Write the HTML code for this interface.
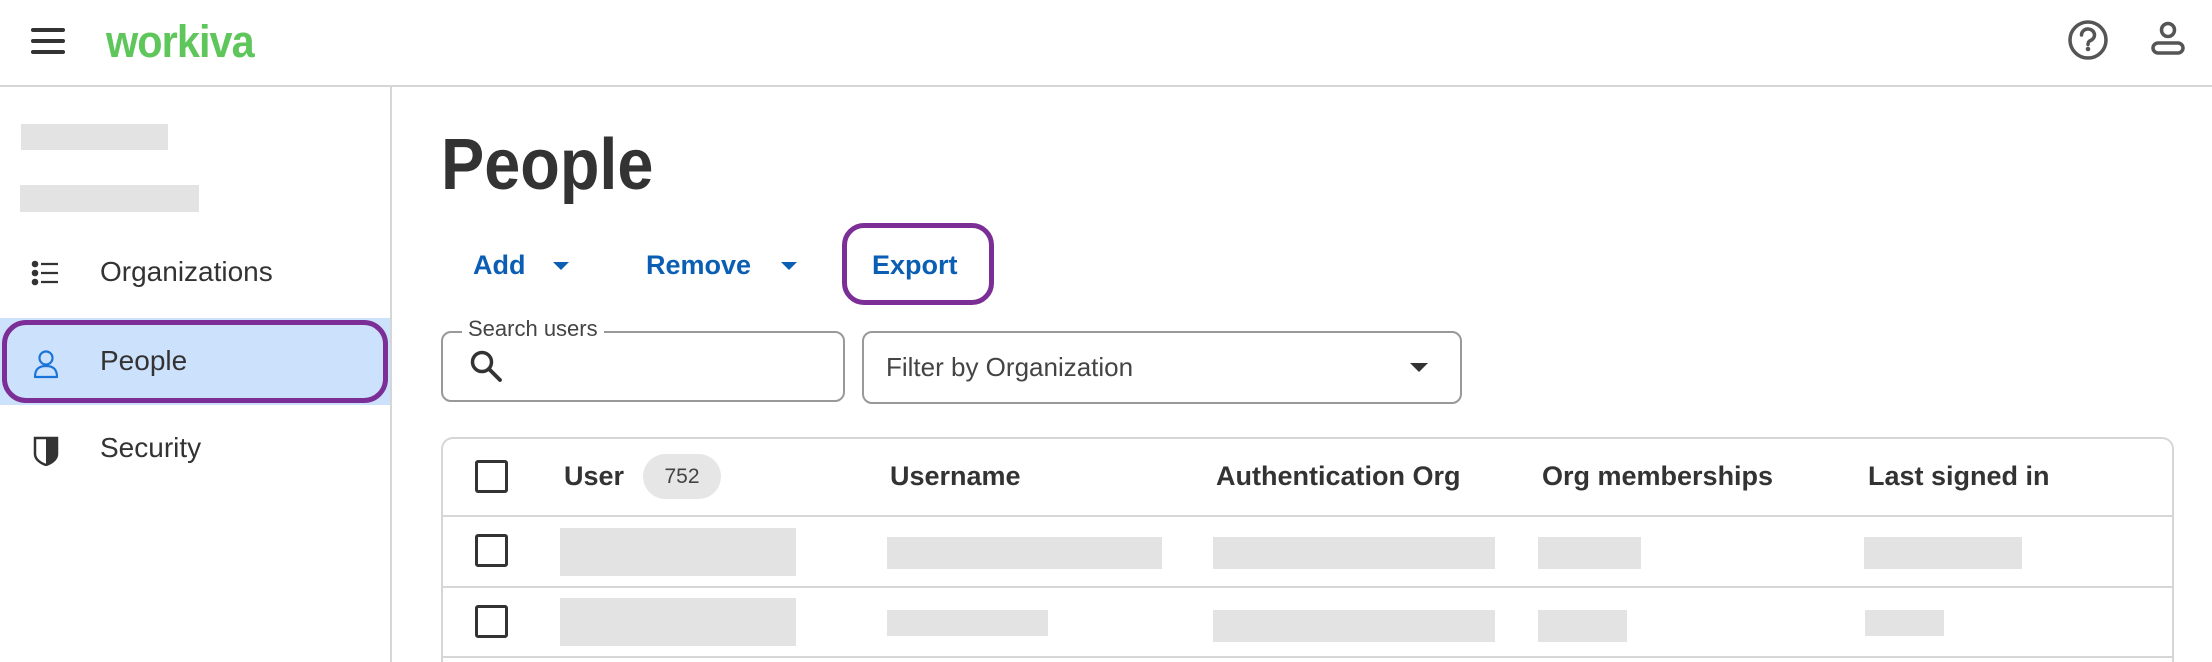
<!DOCTYPE html>
<html style="width:2212px;height:662px;overflow:hidden"><head><style>
*{box-sizing:border-box;margin:0;padding:0}
body{width:2212px;height:662px;overflow:hidden;background:#fff;font-family:"Liberation Sans",sans-serif;color:#333;position:relative}
.a{position:absolute}
.sk{position:absolute;background:#e3e3e3}
.blue{color:#0a5fb4;font-weight:bold;font-size:27px}
.th{position:absolute;font-weight:bold;font-size:27px;color:#333;top:461px}
.cb{position:absolute;width:33px;height:33px;border:3px solid #333;border-radius:3px;left:475px}
</style></head><body>
<div class="a" style="left:31px;top:28px;width:34px;height:4px;background:#333;box-shadow:0 11px 0 #333,0 22px 0 #333;border-radius:2px"></div>
<div class="a" style="left:106px;top:16px;font-size:45px;font-weight:bold;color:#5ec65b;letter-spacing:-1px;transform:scaleX(0.92);transform-origin:left">workiva</div>
<svg class="a" style="left:2066px;top:18px" width="44" height="44" viewBox="0 0 44 44"><circle cx="22" cy="22" r="18" fill="none" stroke="#555" stroke-width="3.5"/><path d="M15.5 17a6.5 6 0 1 1 9 5.5c-2 1-2.5 2-2.5 4" fill="none" stroke="#555" stroke-width="3.5" stroke-linecap="round"/><circle cx="22" cy="31" r="2.3" fill="#555"/></svg>
<svg class="a" style="left:2150px;top:20px" width="36" height="38" viewBox="0 0 36 38"><circle cx="18" cy="10" r="6.5" fill="none" stroke="#555" stroke-width="3.5"/><rect x="3" y="23" width="30" height="10" rx="5" fill="none" stroke="#555" stroke-width="3.5"/></svg>
<div class="a" style="left:0;top:85px;width:2212px;height:2px;background:#d6d6d6"></div>
<div class="a" style="left:390px;top:87px;width:2px;height:575px;background:#d6d6d6"></div>
<div class="sk" style="left:21px;top:124px;width:147px;height:26px"></div>
<div class="sk" style="left:20px;top:185px;width:179px;height:27px"></div>
<svg class="a" style="left:31px;top:260px" width="30" height="28" viewBox="0 0 30 28"><circle cx="4" cy="4" r="3.3" fill="#333"/><circle cx="4" cy="13" r="3.3" fill="#333"/><circle cx="4" cy="22" r="3.3" fill="#333"/><path d="M10 4h17M10 13h17M10 22h17" stroke="#333" stroke-width="2.2"/></svg>
<div class="a" style="left:100px;top:256px;font-size:28px;color:#333">Organizations</div>
<div class="a" style="left:0;top:318px;width:390px;height:87px;background:#cce1fb"></div>
<div class="a" style="left:2px;top:320px;width:386px;height:83px;border:5px solid #7b2e96;border-radius:24px"></div>
<svg class="a" style="left:33px;top:349px" width="26" height="30" viewBox="0 0 26 30"><circle cx="13" cy="9" r="6.5" fill="none" stroke="#1a73d9" stroke-width="2.2"/><path d="M2 28c0-8 4-11 11-11s11 3 11 11z" fill="none" stroke="#1a73d9" stroke-width="2.2" stroke-linejoin="round"/></svg>
<div class="a" style="left:100px;top:345px;font-size:28px;color:#333">People</div>
<svg class="a" style="left:33px;top:436px" width="26" height="30" viewBox="0 0 26 30"><path d="M2 2h22v16c0 5-5 9-11 11C7 27 2 23 2 18z" fill="none" stroke="#333" stroke-width="2.5"/><path d="M13 2h11v16c0 5-5 9-11 11z" fill="#333"/></svg>
<div class="a" style="left:100px;top:432px;font-size:28px;color:#333">Security</div>
<div class="a" style="left:441px;top:124px;font-size:72px;font-weight:bold;color:#333;transform:scaleX(0.9);transform-origin:left">People</div>
<div class="a blue" style="left:473px;top:250px">Add</div>
<div class="a" style="left:553px;top:262px;border-left:8px solid transparent;border-right:8px solid transparent;border-top:8px solid #0a5fb4"></div>
<div class="a blue" style="left:646px;top:250px">Remove</div>
<div class="a" style="left:781px;top:262px;border-left:8px solid transparent;border-right:8px solid transparent;border-top:8px solid #0a5fb4"></div>
<div class="a" style="left:842px;top:223px;width:152px;height:82px;border:5px solid #7b2e96;border-radius:22px"></div>
<div class="a blue" style="left:872px;top:250px">Export</div>
<div class="a" style="left:441px;top:331px;width:404px;height:71px;border:2px solid #999;border-radius:10px"></div>
<div class="a" style="left:462px;top:316px;background:#fff;padding:0 6px;font-size:22px;color:#444">Search users</div>
<svg class="a" style="left:469px;top:349px" width="36" height="36" viewBox="0 0 36 36"><circle cx="13" cy="13" r="9.5" fill="none" stroke="#333" stroke-width="3.5"/><path d="M20 20l11 11" stroke="#333" stroke-width="3.8" stroke-linecap="round"/></svg>
<div class="a" style="left:862px;top:331px;width:600px;height:73px;border:2px solid #999;border-radius:10px"></div>
<div class="a" style="left:886px;top:352px;font-size:26px;color:#444">Filter by Organization</div>
<div class="a" style="left:1410px;top:363px;border-left:9px solid transparent;border-right:9px solid transparent;border-top:9px solid #333"></div>
<div class="a" style="left:441px;top:437px;width:1733px;height:225px;border:2px solid #d6d6d6;border-bottom:none;border-radius:12px 12px 0 0"></div>
<div class="a" style="left:443px;top:515px;width:1729px;height:2px;background:#d6d6d6"></div>
<div class="a" style="left:443px;top:586px;width:1729px;height:2px;background:#d6d6d6"></div>
<div class="a" style="left:443px;top:656px;width:1729px;height:2px;background:#d6d6d6"></div>
<div class="cb" style="top:460px"></div>
<div class="th" style="left:564px">User</div>
<div class="a" style="left:643px;top:454px;width:78px;height:45px;border-radius:23px;background:#e6e6e6;font-size:21px;color:#444;text-align:center;line-height:45px">752</div>
<div class="th" style="left:890px">Username</div>
<div class="th" style="left:1216px">Authentication Org</div>
<div class="th" style="left:1542px">Org memberships</div>
<div class="th" style="left:1868px">Last signed in</div>
<div class="cb" style="top:534px"></div>
<div class="sk" style="left:560px;top:528px;width:236px;height:48px"></div>
<div class="sk" style="left:887px;top:537px;width:275px;height:32px"></div>
<div class="sk" style="left:1213px;top:537px;width:282px;height:32px"></div>
<div class="sk" style="left:1538px;top:537px;width:103px;height:32px"></div>
<div class="sk" style="left:1864px;top:537px;width:158px;height:32px"></div>
<div class="cb" style="top:605px"></div>
<div class="sk" style="left:560px;top:598px;width:236px;height:48px"></div>
<div class="sk" style="left:887px;top:610px;width:161px;height:26px"></div>
<div class="sk" style="left:1213px;top:610px;width:282px;height:32px"></div>
<div class="sk" style="left:1538px;top:610px;width:89px;height:32px"></div>
<div class="sk" style="left:1865px;top:610px;width:79px;height:26px"></div>
</body></html>
